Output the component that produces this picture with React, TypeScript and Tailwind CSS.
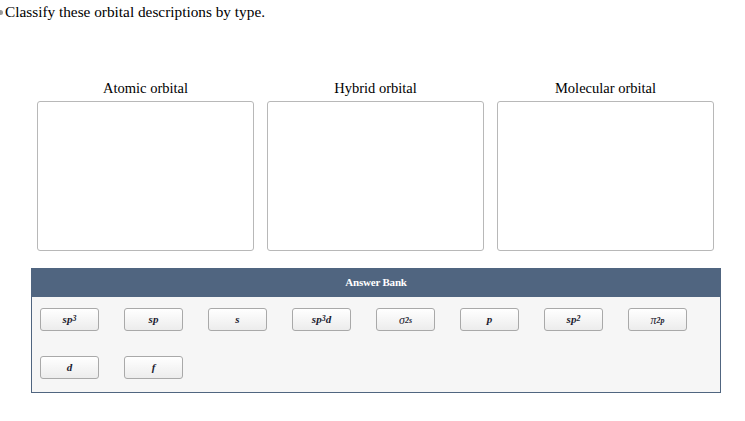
import React from 'react';

const serif = { fontFamily: '"Liberation Serif", "Times New Roman", serif' };

function Tile({ children }: { children: React.ReactNode }) {
  return (
    <div className="w-[59px] h-[23px] rounded-[3px] border border-[#a9a9a9] bg-gradient-to-b from-white to-[#ececec] flex items-center justify-center text-[11px] font-bold italic text-[#1c1c30]">
      {children}
    </div>
  );
}

const columns = ['Atomic orbital', 'Hybrid orbital', 'Molecular orbital'];

export default function App() {
  return (
    <div className="w-[745px] h-[421px] bg-white relative overflow-hidden" style={serif}>
      <div className="flex items-center h-[24px] text-[15.3px] text-black">
        <span className="w-[3px] h-[5px] rounded-r-full bg-[#999] mr-[2px]" />
        <span>Classify these orbital descriptions by type.</span>
      </div>

      <div className="flex gap-[13px] pl-[37px] mt-[56px]">
        {columns.map((c) => (
          <div key={c} className="w-[217px] flex flex-col">
            <div className="text-center text-[14.5px] leading-[17px] text-black mb-[4px]">{c}</div>
            <div className="h-[150px] rounded-[3px] border border-[#b8b8b8] bg-white" />
          </div>
        ))}
      </div>

      <div className="ml-[31px] mt-[17px] w-[690px]">
        <div className="h-[29px] bg-[#506580] flex items-center justify-center text-white text-[11px] font-bold tracking-[-0.2px]">
          Answer Bank
        </div>
        <div className="h-[96px] bg-[#f6f6f6] border border-t-0 border-[#506580] pl-[8px] pt-[11px] flex flex-col gap-[25px]">
          <div className="flex gap-[25px]">
            <Tile>
              sp<sup className="text-[8px] relative -top-[1px]">3</sup>
            </Tile>
            <Tile>sp</Tile>
            <Tile>s</Tile>
            <Tile>
              sp<sup className="text-[8px] relative -top-[1px]">3</sup>d
            </Tile>
            <Tile>
              <span className="font-normal text-[12px]">σ</span>
              <sub className="text-[8px] relative top-[1px]">2s</sub>
            </Tile>
            <Tile>p</Tile>
            <Tile>
              sp<sup className="text-[8px] relative -top-[1px]">2</sup>
            </Tile>
            <Tile>
              <span className="font-normal text-[12px]">π</span>
              <sub className="text-[8px] relative top-[1px]">2p</sub>
            </Tile>
          </div>
          <div className="flex gap-[25px]">
            <Tile>d</Tile>
            <Tile>f</Tile>
          </div>
        </div>
      </div>
    </div>
  );
}
